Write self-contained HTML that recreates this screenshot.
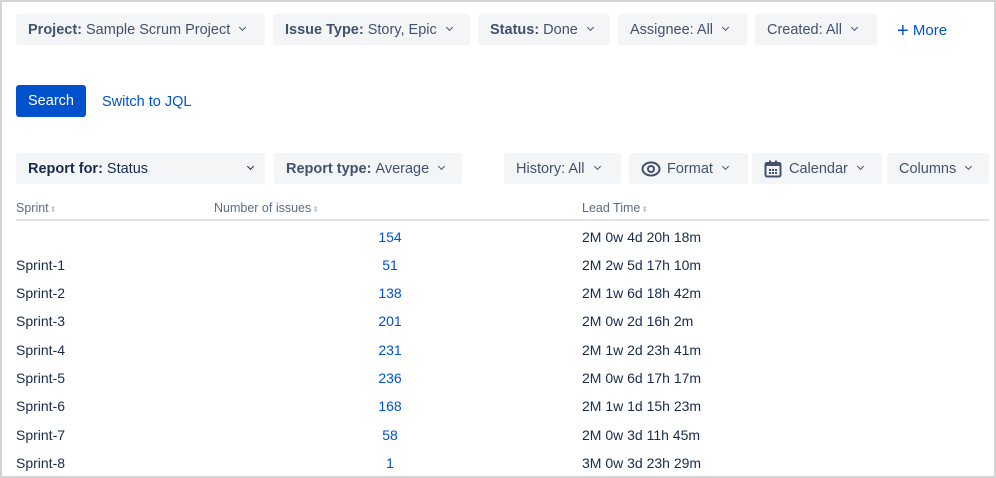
<!DOCTYPE html>
<html><head><style>
*{box-sizing:border-box;margin:0;padding:0}
body{width:996px;height:478px;overflow:hidden;background:#fff;font-family:"Liberation Sans",sans-serif;font-size:14px;color:#172b4d}
.frame{position:absolute;left:0;top:0;width:996px;height:478px;border:2px solid #d4d4d4;border-bottom:none}
.b{position:absolute;height:31px;background:#f4f5f7;border-radius:3px;color:#42526e;display:flex;align-items:center;padding:0 12px;font-size:14.5px;white-space:nowrap}
.b strong{font-weight:bold;margin-right:4px}
.c{display:inline-block;width:5px;height:5px;border-right:1.5px solid #42526e;border-bottom:1.5px solid #42526e;transform:rotate(45deg);margin-left:10px;margin-top:-4px}
.sp{justify-content:space-between}
.t{position:absolute;white-space:nowrap}
.h{color:#5e6c84;font-size:12.5px}
.s{font-size:8px;color:#c1c7d0;margin-left:1px}
.n{color:#0052cc;text-align:center;width:60px}
</style></head><body>
<div class="frame"></div>
<div class="b" style="left:16px;top:14px;width:249px"><strong>Project:</strong>Sample Scrum Project<span class="c"></span></div>
<div class="b" style="left:273px;top:14px;width:197px"><strong>Issue Type:</strong>Story, Epic<span class="c"></span></div>
<div class="b" style="left:478px;top:14px;width:132px"><strong>Status:</strong>Done<span class="c"></span></div>
<div class="b" style="left:618px;top:14px;width:129px">Assignee: All<span class="c"></span></div>
<div class="b" style="left:755px;top:14px;width:122px">Created: All<span class="c"></span></div>
<div class="t" style="left:897px;top:20px;color:#0052cc;font-size:15px"><span style="font-size:20px;vertical-align:-2px">+</span> More</div>
<div class="t" style="left:16px;top:85px;width:70px;height:32px;background:#0052cc;color:#fff;border-radius:3px;text-align:center;line-height:33px;font-size:14.5px">Search</div>
<div class="t" style="left:102px;top:94px;color:#0052cc;font-size:14.5px">Switch to JQL</div>
<div class="b sp" style="left:16px;top:153px;width:249px;color:#172b4d"><span><strong>Report for:</strong>Status</span><span class="c" style="border-color:#172b4d"></span></div>
<div class="b" style="left:274px;top:153px;width:188px"><strong>Report type:</strong>Average<span class="c"></span></div>
<div class="b" style="left:504px;top:153px;width:117px">History: All<span class="c"></span></div>
<div class="b" style="left:629px;top:153px;width:119px"><svg width="20" height="16" viewBox="0 0 20 16" style="margin-right:6px"><ellipse cx="10" cy="8" rx="8.5" ry="6.5" fill="none" stroke="#42526e" stroke-width="2"/><circle cx="10" cy="8" r="3" fill="none" stroke="#42526e" stroke-width="2"/></svg>Format<span class="c"></span></div>
<div class="b" style="left:752px;top:153px;width:130px"><svg width="18" height="18" viewBox="0 0 18 18" style="margin-right:7px"><rect x="1.5" y="3" width="15" height="13.5" rx="1.5" fill="none" stroke="#42526e" stroke-width="2"/><rect x="1.5" y="3" width="15" height="3" fill="#42526e"/><rect x="5" y="0.5" width="2" height="4" fill="#42526e"/><rect x="11" y="0.5" width="2" height="4" fill="#42526e"/><g fill="#42526e"><rect x="5" y="9" width="2" height="2"/><rect x="8" y="9" width="2" height="2"/><rect x="11" y="9" width="2" height="2"/><rect x="5" y="12" width="2" height="2"/><rect x="8" y="12" width="2" height="2"/><rect x="11" y="12" width="2" height="2"/></g></svg>Calendar<span class="c"></span></div>
<div class="b" style="left:887px;top:153px;width:102px">Columns<span class="c"></span></div>
<div class="t h" style="left:16px;top:201px">Sprint<span class="s">⬍</span></div>
<div class="t h" style="left:214px;top:201px">Number of issues<span class="s">⬍</span></div>
<div class="t h" style="left:582px;top:201px">Lead Time<span class="s">⬍</span></div>
<div class="t" style="left:16px;top:219px;width:973px;height:2px;background:#dfe1e6"></div>
<div class="t n" style="left:360px;top:229px">154</div><div class="t" style="left:582px;top:229px">2M 0w 4d 20h 18m</div>
<div class="t" style="left:16px;top:257px">Sprint-1</div><div class="t n" style="left:360px;top:257px">51</div><div class="t" style="left:582px;top:257px">2M 2w 5d 17h 10m</div>
<div class="t" style="left:16px;top:285px">Sprint-2</div><div class="t n" style="left:360px;top:285px">138</div><div class="t" style="left:582px;top:285px">2M 1w 6d 18h 42m</div>
<div class="t" style="left:16px;top:313px">Sprint-3</div><div class="t n" style="left:360px;top:313px">201</div><div class="t" style="left:582px;top:313px">2M 0w 2d 16h 2m</div>
<div class="t" style="left:16px;top:342px">Sprint-4</div><div class="t n" style="left:360px;top:342px">231</div><div class="t" style="left:582px;top:342px">2M 1w 2d 23h 41m</div>
<div class="t" style="left:16px;top:370px">Sprint-5</div><div class="t n" style="left:360px;top:370px">236</div><div class="t" style="left:582px;top:370px">2M 0w 6d 17h 17m</div>
<div class="t" style="left:16px;top:398px">Sprint-6</div><div class="t n" style="left:360px;top:398px">168</div><div class="t" style="left:582px;top:398px">2M 1w 1d 15h 23m</div>
<div class="t" style="left:16px;top:427px">Sprint-7</div><div class="t n" style="left:360px;top:427px">58</div><div class="t" style="left:582px;top:427px">2M 0w 3d 11h 45m</div>
<div class="t" style="left:16px;top:455px">Sprint-8</div><div class="t n" style="left:360px;top:455px">1</div><div class="t" style="left:582px;top:455px">3M 0w 3d 23h 29m</div>
<div class="t" style="left:0;top:476px;width:996px;height:2px;background:#d4d4d4"></div>
</body></html>
